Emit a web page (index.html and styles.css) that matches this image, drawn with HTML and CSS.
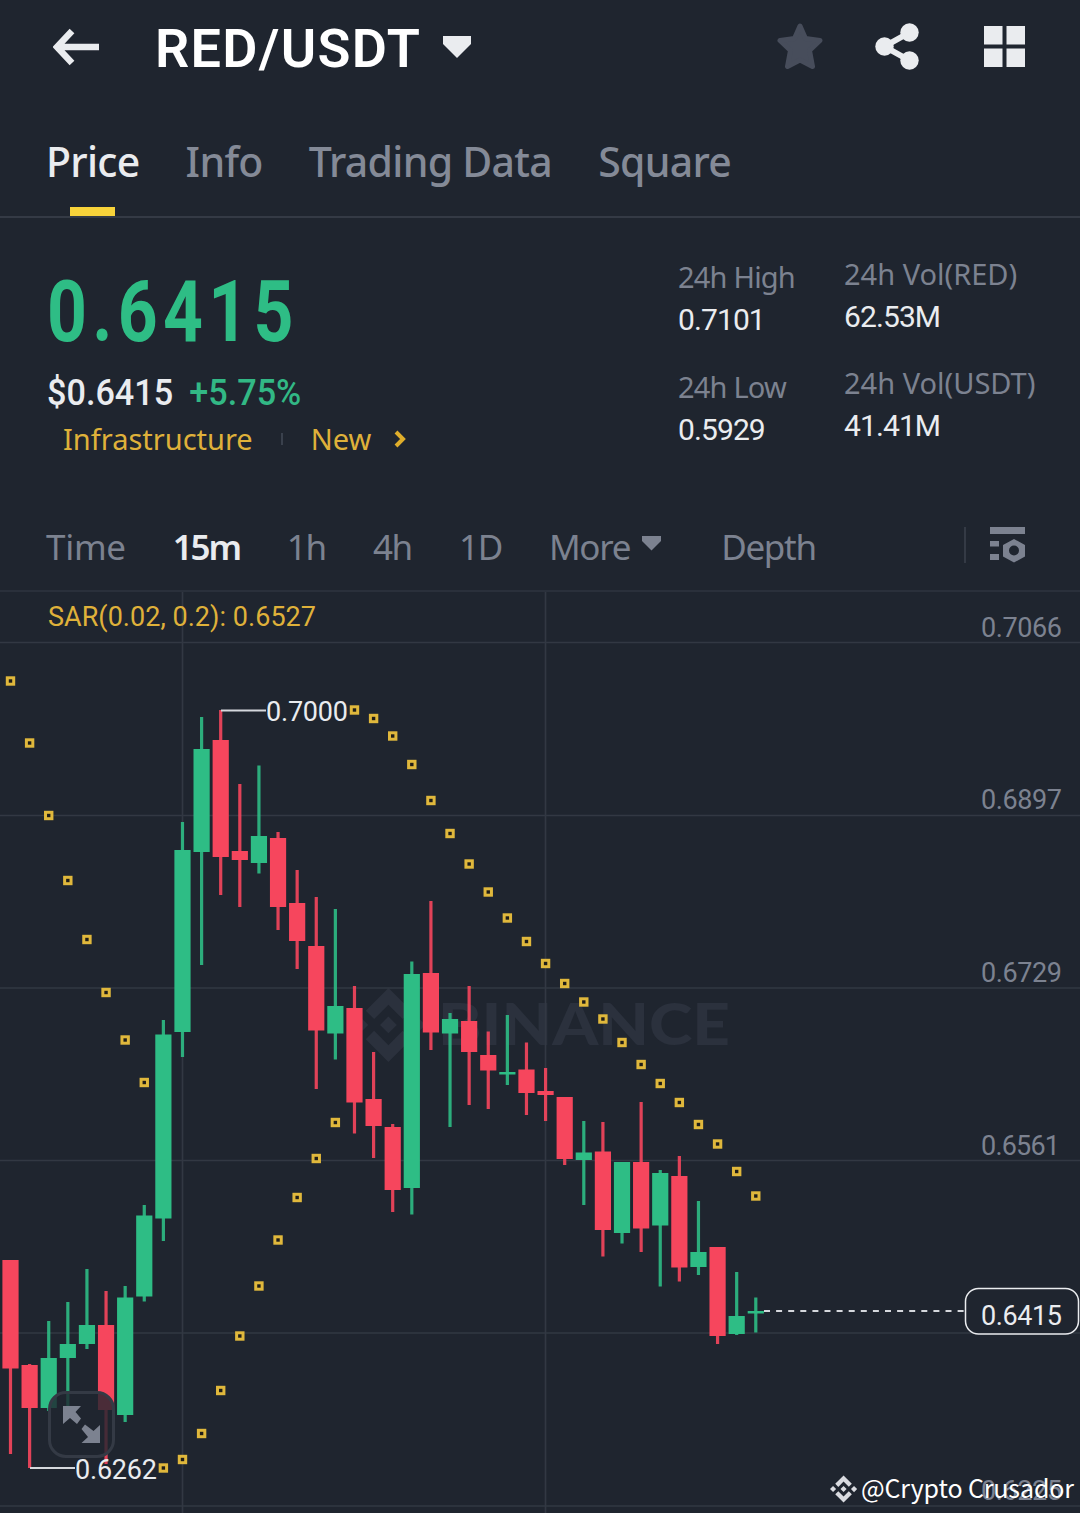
FILE: index.html
```html
<!DOCTYPE html>
<html lang="en">
  <head>
    <meta charset="UTF-8" />
    <meta name="viewport" content="width=device-width, initial-scale=1.0" />
    <title>RED/USDT</title>
    <link rel="stylesheet" href="styles.css">
  </head>
  <body>
    <header class="header">
      <svg class="back" width="46" height="38" viewBox="0 0 46 38">
        <path d="M19 3L4 19L19 35M4 19H46" fill="none" stroke="#eaecef" stroke-width="6.5" />
      </svg>
      <h1 class="pair">RED/USDT</h1>
      <svg class="pair-caret" width="28" height="22" viewBox="0 0 28 22">
        <path d="M0 0H28V8L14 22L0 8Z" fill="#eaecef" />
      </svg>
      <div class="actions">
        <svg width="46" height="47" viewBox="0 0 46 47">
          <path d="M23 3L28.5 15.5L43 17.5L32.5 27.5L35.5 43.5L23 37L10.5 43.5L13.5 27.5L3 17.5L17.5 15.5Z" fill="#474d5b" stroke="#474d5b" stroke-width="5" stroke-linejoin="round" />
        </svg>
        <svg width="44" height="47" viewBox="0 0 44 47">
          <path d="M34.5 9.500L9.500 23.500L34.500 37.500" fill="none" stroke="#eaecef" stroke-width="6" />
          <circle cx="9.500" cy="23.500" r="9.200" fill="#eaecef" />
          <circle cx="34.500" cy="9.500" r="9.200" fill="#eaecef" />
          <circle cx="34.500" cy="37.500" r="9.200" fill="#eaecef" />
        </svg>
        <svg width="41" height="41" viewBox="0 0 41 41">
          <path d="M0 0H18.500V18.500H0ZM22.500 0H41V18.500H22.500ZM0 22.500H18.500V41H0ZM22.500 22.500H41V41H22.500Z" fill="#eaecef" />
        </svg>
      </div>
    </header>

    <nav class="tabs">
      <a class="tab active">Price</a>
      <a class="tab">Info</a>
      <a class="tab">Trading Data</a>
      <a class="tab">Square</a>
    </nav>

    <section class="summary">
      <div class="quote">
        <div class="last">0.6415</div>
        <div class="fiat"><span>$0.6415</span><span class="change">+5.75%</span></div>
        <div class="tags">
          <span class="tag-main">Infrastructure</span>
          <i class="tag-sep"></i>
          <span>New</span>
          <svg class="chevron" width="12" height="18" viewBox="0 0 12 18">
            <path d="M2 2L9 9L2 16" fill="none" stroke="#dfae2b" stroke-width="4" />
          </svg>
        </div>
      </div>
      <div class="stats range">
        <div class="stat"><span class="label">24h High</span><span class="value">0.7101</span></div>
        <div class="stat"><span class="label">24h Low</span><span class="value">0.5929</span></div>
      </div>
      <div class="stats volume">
        <div class="stat"><span class="label">24h Vol(RED)</span><span class="value">62.53M</span></div>
        <div class="stat"><span class="label">24h Vol(USDT)</span><span class="value">41.41M</span></div>
      </div>
    </section>

    <div class="toolbar">
      <span class="time">Time</span>
      <span class="active">15m</span>
      <span>1h</span>
      <span>4h</span>
      <span>1D</span>
      <span class="more">More
        <svg width="20" height="15" viewBox="0 0 20 15"><path d="M0 0H19V5L9.500 14.500L0 5Z" fill="#7c8290" /></svg>
      </span>
      <span class="depth">Depth</span>
      <div class="tools">
        <i class="tools-sep"></i>
        <svg width="36" height="36" viewBox="0 0 36 36" fill="#7c8290">
          <path d="M0 0H35V7H0ZM0 14H9V19.500H0ZM0 27H9V33H0Z" />
          <path fill-rule="evenodd" d="M24 12L35 18V29.500L24 35.500L13 29.500V18ZM24 18.500A5 5 0 1 0 24 28.500A5 5 0 1 0 24 18.500Z" />
        </svg>
      </div>
    </div>

    <main class="chart">
      <svg class="plot" width="1080" height="921" viewBox="0 592 1080 921">
        <defs>
          <path id="logo" d="M16.624 13.920l2.718 2.715-7.353 7.353-7.353-7.352 2.717-2.716 4.636 4.660 4.635-4.660zm4.637-4.637L24 12l-2.715 2.716L18.568 12l2.693-2.716zm-9.272.001l2.716 2.691-2.716 2.718L9.272 12l2.717-2.715zm-9.273-.001L5.409 12l-2.692 2.692L0 12l2.716-2.716zM11.989.012l7.353 7.329-2.718 2.715-4.635-4.636-4.636 4.660-2.717-2.715z" />
        </defs>
        <g class="watermark">
          <use href="#logo" transform="translate(351.500 988) scale(3.080)" />
          <text x="438" y="1045" textLength="292" lengthAdjust="spacingAndGlyphs">BINANCE</text>
        </g>
        <g id="grid" class="grid"></g>
        <g id="candles"></g>
        <g id="sar"></g>
        <text class="indicator" x="48" y="626" textLength="268">SAR(0.02, 0.2): 0.6527</text>
        <g class="axis">
          <text x="981" y="637" textLength="81">0.7066</text>
          <text x="981" y="809" textLength="81">0.6897</text>
          <text x="981" y="982" textLength="81">0.6729</text>
          <text x="981" y="1155" textLength="79">0.6561</text>
          <text x="981" y="1500" textLength="81">0.6225</text>
        </g>
        <path class="last-line" d="M764 1311H965" />
        <rect class="last-box" x="965.500" y="1288.500" width="113" height="45.500" rx="13" />
        <text class="bright" x="981" y="1325" textLength="81">0.6415</text>
      </svg>
      <div class="expand">
        <svg width="37" height="37" viewBox="0 0 37 37">
          <path d="M0 0H18L12.500 6L18 12.500L14 18L7 12L0 18ZM22 18.500L30.500 25L37 19V37H18.500L25 31L18.500 23Z" fill="#7c8290" />
        </svg>
      </div>
      <svg class="plot marks" width="1080" height="921" viewBox="0 592 1080 921">
        <path class="leader" d="M221 710.500H266M30 1468H75" />
        <text class="bright" x="266" y="721" textLength="82">0.7000</text>
        <text class="bright" x="75" y="1479" textLength="82">0.6262</text>
        <use href="#logo" fill="#d9dbe0" transform="translate(830 1475.500) scale(1.130)" />
        <text class="author" x="861" y="1498" textLength="213">@Crypto Crusador</text>
      </svg>
    </main>
    <script src="script.js"></script>
  </body>
</html>
```
FILE: styles.css
```css
* {
  box-sizing: border-box;
}
body {
  margin: 0;
  width: 1080px;
  height: 1513px;
  overflow: hidden;
  background: #1f252f;
  color: #eaecef;
  font-family: "Noto Sans", sans-serif;
}
svg {
  display: block;
  flex: none;
}
.header {
  display: flex;
  align-items: center;
  height: 96px;
  padding: 0 55px 3px 53px;
}
.pair {
  margin: 4px 0 0 56px;
  font: 600 54px/60px Roboto, sans-serif;
  letter-spacing: 1.3px;
  color: #fff;
}
.pair-caret {
  margin-left: 22px;
}
.actions {
  display: flex;
  align-items: center;
  margin-left: auto;
}
.actions svg {
  margin-left: 65px;
}
.actions svg:nth-child(2) {
  margin-left: 52px;
}
.tabs {
  display: flex;
  gap: 46px;
  height: 122px;
  padding: 41px 46px 0;
  border-bottom: 2px solid #343a45;
}
.tab {
  display: flex;
  flex-direction: column;
  align-items: center;
  font-size: 41px;
  font-weight: 500;
  line-height: 48px;
  letter-spacing: -0.7px;
  color: #848a97;
}
.tab.active {
  color: #eaecef;
}
.tab.active::after {
  content: "";
  width: 45px;
  height: 9px;
  margin-top: auto;
  background: #f8d33a;
}
.summary {
  display: flex;
  height: 285px;
  padding-left: 47px;
}
.quote {
  width: 631px;
  padding-top: 54px;
}
.last {
  font: 700 86px/80px Roboto, sans-serif;
  letter-spacing: 6.5px;
  transform: scaleX(0.81);
  transform-origin: left;
  color: #2ebd85;
}
.fiat {
  display: flex;
  gap: 17px;
  margin-top: 19px;
  font: 500 36px/44px Roboto, sans-serif;
  transform: scaleX(0.95);
  transform-origin: left;
}
.change {
  color: #32b885;
}
.tags {
  display: flex;
  align-items: center;
  margin-top: 4px;
  padding-left: 16px;
  font-size: 29px;
  line-height: 40px;
  color: #dfb13a;
}
.tag-sep {
  width: 2px;
  height: 12px;
  margin: 0 28px;
  background: #3a414d;
}
.chevron {
  margin-left: 23px;
}
.stats {
  display: flex;
  flex-direction: column;
  gap: 27px;
  width: 166px;
  padding-top: 39px;
  white-space: nowrap;
}
.stats.volume {
  gap: 26px;
  padding-top: 36px;
}
.stat {
  display: flex;
  flex-direction: column;
  gap: 3px;
  line-height: 41px;
}
.stat .label {
  line-height: 39px;
}
.label {
  font-size: 29px;
  color: #7c8290;
}
.range .label {
  letter-spacing: -0.8px;
}
.value {
  font-family: Roboto, sans-serif;
  font-size: 30px;
  letter-spacing: -0.9px;
}
.toolbar {
  display: flex;
  align-items: center;
  gap: 47px;
  height: 89px;
  padding: 0 54px 0 46px;
  border-bottom: 2px solid #2a303b;
  font-size: 35px;
  line-height: 48px;
  letter-spacing: -1.3px;
  color: #7c8290;
}
.toolbar .time {
  letter-spacing: -0.3px;
}
.toolbar .active {
  font-weight: 600;
  letter-spacing: -2.2px;
  color: #eaecef;
}
.more {
  display: flex;
  align-items: center;
  gap: 12px;
}
.more svg {
  margin-top: -7px;
}
.depth {
  margin-left: 12px;
}
.tools {
  display: flex;
  align-items: center;
  gap: 24px;
  margin: -3px 0 0 auto;
}
.tools-sep {
  width: 2px;
  height: 36px;
  background: #343a45;
}
.chart {
  position: relative;
  height: 921px;
}
.marks {
  position: absolute;
  inset: 0;
}
.plot text {
  font-family: Roboto, sans-serif;
  font-size: 27px;
}
.plot .watermark {
  fill: #2b313d;
}
.plot .watermark text {
  font-family: Lato, sans-serif;
  font-size: 57px;
  font-weight: 900;
}
.grid {
  stroke: #323843;
  stroke-width: 1.7;
}
.plot .indicator {
  fill: #dfb13a;
}
.axis {
  fill: #7c8290;
}
.bright {
  fill: #eaecef;
}
.last-line {
  stroke: #d5d8dd;
  stroke-width: 2;
  stroke-dasharray: 6 6.1;
}
.last-box {
  fill: #1f252f;
  stroke: #eaecef;
  stroke-width: 1.5;
}
.leader {
  stroke: #d5d8dd;
  stroke-width: 2;
}
.up {
  fill: #2ebd85;
}
.down {
  fill: #f6465d;
}
.wick {
  opacity: 0.9;
}
.dot {
  fill: #1f1d18;
  stroke: #e0b83c;
  stroke-width: 3;
}
.expand {
  position: absolute;
  left: 48px;
  top: 799px;
  display: flex;
  align-items: center;
  justify-content: center;
  width: 67px;
  height: 67px;
  border: 3px solid #343a45;
  border-radius: 18px;
  background: rgba(31, 37, 47, 0.8);
}
.plot .author {
  font-family: "Noto Sans CJK SC", sans-serif;
  font-size: 25px;
  font-weight: 400;
  fill: #fff;
}
```
FILE: script.js
```js
const NS = "http://www.w3.org/2000/svg";
const START = 10.5;
const STEP = 19.11;

// [direction, high, body top, body bottom, low] in chart units
const candles = [
  ["down", 1260, 1260, 1368.5, 1454],
  ["down", 1364, 1365, 1408, 1468],
  ["up", 1321, 1358, 1408, 1411],
  ["up", 1302, 1344, 1358, 1407],
  ["up", 1269, 1325, 1344, 1349],
  ["down", 1291, 1325, 1410, 1464],
  ["up", 1286, 1297.5, 1415, 1422],
  ["up", 1205, 1215.5, 1296.5, 1301.5],
  ["up", 1020, 1034.5, 1218.5, 1241],
  ["up", 822, 850, 1032, 1057],
  ["up", 717, 749, 852, 965],
  ["down", 710, 740, 857, 895],
  ["down", 784, 851, 860, 907],
  ["up", 765.5, 836, 863, 873.5],
  ["down", 832, 838, 907, 930],
  ["down", 870, 903, 941, 969],
  ["down", 897, 946, 1030.5, 1089],
  ["up", 909, 1006, 1033.5, 1059.5],
  ["down", 986, 1008, 1102.5, 1133.5],
  ["down", 1052, 1099, 1126, 1158],
  ["down", 1124, 1127, 1190, 1212],
  ["up", 961.5, 974, 1188, 1214.5],
  ["down", 901, 973, 1032.5, 1050],
  ["up", 1013, 1019, 1033.5, 1127],
  ["down", 986, 1021, 1052, 1105],
  ["down", 1031.5, 1055, 1070.5, 1109],
  ["up", 1015, 1072, 1074.5, 1085],
  ["down", 1042.5, 1069.5, 1093, 1115],
  ["down", 1068, 1091, 1095, 1121],
  ["down", 1097, 1097, 1159, 1165],
  ["up", 1121, 1152.5, 1160, 1205],
  ["down", 1122, 1151.5, 1230, 1256.5],
  ["up", 1162, 1162, 1233, 1243.5],
  ["down", 1102, 1162, 1228.5, 1252],
  ["up", 1170, 1173, 1225.5, 1286.5],
  ["down", 1156, 1176, 1267.5, 1281.5],
  ["up", 1201, 1252, 1267, 1275],
  ["down", 1247, 1247, 1336, 1344],
  ["up", 1272, 1316, 1334, 1335],
  ["up", 1297.5, 1311, 1313.5, 1332.5],
];

const sar = [
  681, 743, 815.5, 880.5, 939.5, 992.5, 1040, 1082.5, 1468, 1459.5,
  1433.5, 1390.5, 1336, 1286, 1240, 1197.5, 1158.5, 1122.5, 710, 718.5,
  736, 764.5, 800.5, 833.5, 864, 892, 918, 941.5, 963.5, 983.5,
  1002, 1019, 1042.5, 1064.5, 1083.5, 1102.5, 1124.5, 1144, 1171.5, 1196,
];

function add(parent, tag, attrs) {
  const el = document.createElementNS(NS, tag);
  for (const key in attrs) el.setAttribute(key, attrs[key]);
  document.getElementById(parent).appendChild(el);
}

function rect(parent, cls, x, y, width, height) {
  add(parent, "rect", { class: cls, x, y, width, height });
}

[642.5, 815.5, 988, 1160.5, 1333, 1506].forEach((y) => {
  add("grid", "path", { d: `M0 ${y}H1080` });
});
[182.5, 545.5].forEach((x) => {
  add("grid", "path", { d: `M${x} 592V1513` });
});

candles.forEach(([dir, high, top, bottom, low], i) => {
  const x = START + i * STEP;
  rect("candles", dir + " wick", x - 1.6, high, 3.2, low - high);
  rect("candles", dir, x - 8.1, top, 16.2, bottom - top);
});

sar.forEach((y, i) => {
  rect("sar", "dot", START + i * STEP - 3.2, y - 3.2, 6.4, 6.4);
});
```
